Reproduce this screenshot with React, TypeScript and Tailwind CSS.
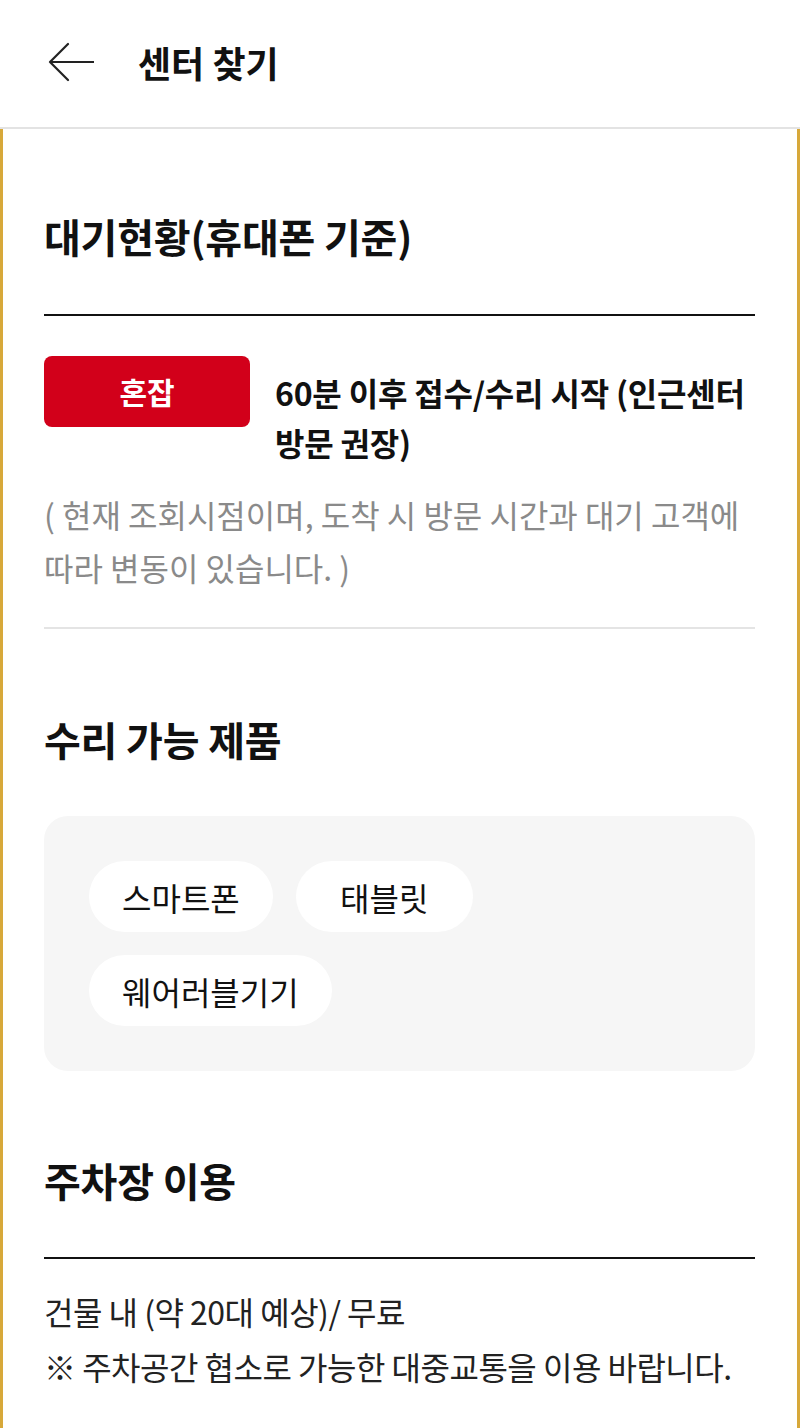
import React from "react";

const font = { fontFamily: '"Noto Sans CJK KR", "Noto Sans", sans-serif' };

function Divider({ dark }: { dark?: boolean }) {
  return <div className={dark ? "h-[2px] bg-[#111111]" : "h-[2px] bg-[#e4e4e4]"} />;
}

export default function App() {
  return (
    <div className="w-[800px] min-h-[1428px] bg-white text-[#111111]" style={font}>
      <header className="h-[129px] flex items-center pl-[48px] border-b-2 border-[#e3e3e3]">
        <svg width="46" height="40" viewBox="0 0 46 40" fill="none" className="shrink-0 -mt-[4px]">
          <path d="M20 2 L2 20 L20 38 M2 20 H46" stroke="#222" strokeWidth="2.2" strokeLinecap="round" strokeLinejoin="round" />
        </svg>
        <h1 className="ml-[44px] -mt-[4px] text-[36px] font-bold leading-none">센터 찾기</h1>
      </header>

      <main className="border-l-[3px] border-r-[3px] border-[#d7a83a] pl-[41px] pr-[42px] pb-[40px]">
        <h2 className="pt-[83px] text-[40px] font-bold leading-[48px] tracking-[-0.2px]">대기현황(휴대폰 기준)</h2>
        <div className="mt-[54px]">
          <Divider dark />
        </div>

        <div className="mt-[40px] flex items-start">
          <div className="w-[206px] h-[71px] shrink-0 rounded-[8px] bg-[#d2001a] flex items-center justify-center text-white text-[30px] font-bold">
            혼잡
          </div>
          <p className="ml-[25px] mt-[11px] text-[32px] font-bold leading-[50px] tracking-[-0.2px] whitespace-nowrap">
            60분 이후 접수/수리 시작 (인근센터
            <br />
            방문 권장)
          </p>
        </div>

        <p className="mt-[21px] text-[32px] leading-[53px] text-[#8a8a8a] tracking-[0px] whitespace-nowrap">
          ( 현재 조회시점이며, 도착 시 방문 시간과 대기 고객에
          <br />
          따라 변동이 있습니다. )
        </p>

        <div className="mt-[33px]">
          <Divider />
        </div>

        <h2 className="mt-[86px] text-[40px] font-bold leading-[48px] tracking-[-0.2px]">수리 가능 제품</h2>

        <div className="mt-[53px] rounded-[24px] bg-[#f6f6f6] px-[45px] pt-[45px] pb-[45px] flex flex-wrap gap-x-[23px] gap-y-[23px]">
          {["스마트폰", "태블릿", "웨어러블기기"].map((t) => (
            <div
              key={t}
              className="h-[71px] min-w-[177px] px-[33px] rounded-full bg-white flex items-center justify-center text-[32px] text-[#111111]"
            >
              {t}
            </div>
          ))}
        </div>

        <h2 className="mt-[85px] text-[40px] font-bold leading-[48px] tracking-[-0.2px]">주차장 이용</h2>
        <div className="mt-[53px]">
          <Divider dark />
        </div>
        <p className="mt-[25px] text-[32px] leading-[55px] text-[#222222] tracking-[-0.5px] whitespace-nowrap">
          건물 내 (약 20대 예상)/ 무료
          <br />
          ※ 주차공간 협소로 가능한 대중교통을 이용 바랍니다.
        </p>
      </main>
    </div>
  );
}
